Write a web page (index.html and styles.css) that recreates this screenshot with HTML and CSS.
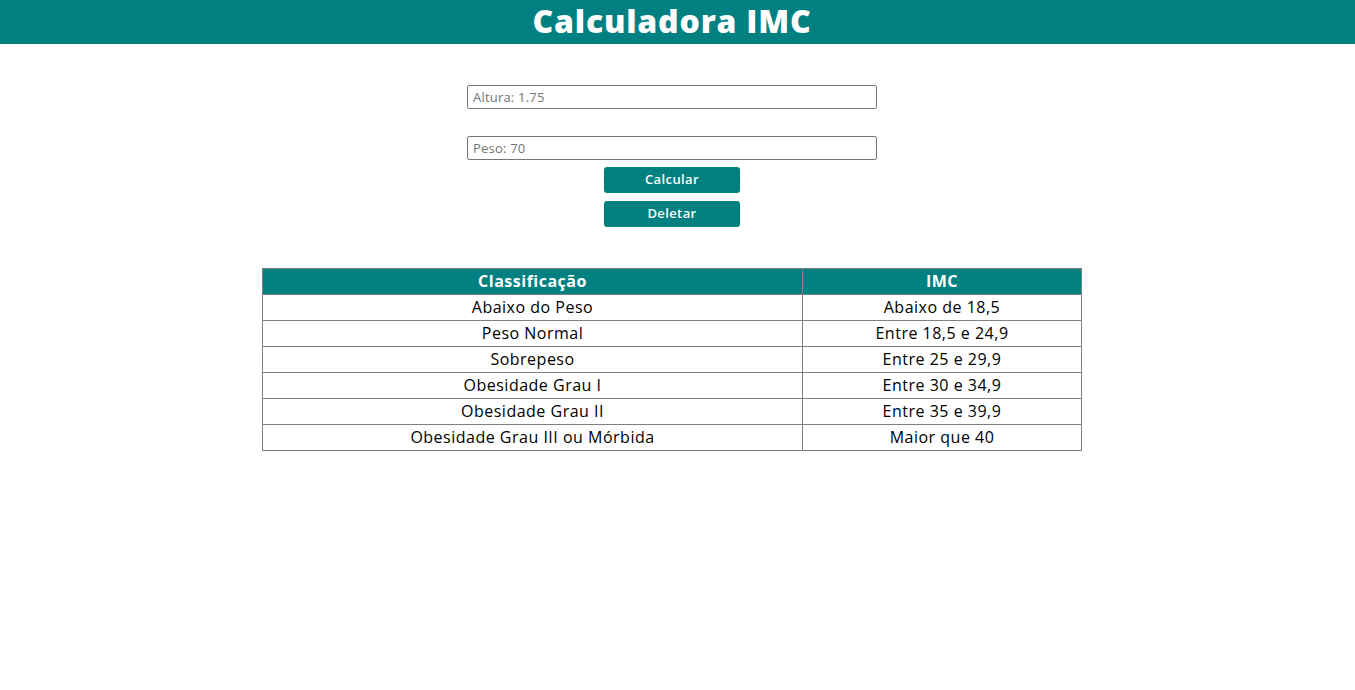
FILE: index.html
```html
<!DOCTYPE html>
<html lang="pt-BR">
<head>
<meta charset="utf-8">
<title>Calculadora IMC</title>
<link rel="stylesheet" href="styles.css">
</head>
<body>
<header class="topbar">
  <h1 class="title">Calculadora IMC</h1>
</header>
<main class="page">
  <form class="calc">
    <input class="field" type="text" placeholder="Altura: 1.75">
    <input class="field field-second" type="text" placeholder="Peso: 70">
    <button class="btn" type="button">Calcular</button>
    <button class="btn" type="button">Deletar</button>
  </form>
  <table class="imc-table">
    <thead>
      <tr><th class="col-a">Classificação</th><th>IMC</th></tr>
    </thead>
    <tbody>
      <tr><td>Abaixo do Peso</td><td>Abaixo de 18,5</td></tr>
      <tr><td>Peso Normal</td><td>Entre 18,5 e 24,9</td></tr>
      <tr><td>Sobrepeso</td><td>Entre 25 e 29,9</td></tr>
      <tr><td>Obesidade Grau I</td><td>Entre 30 e 34,9</td></tr>
      <tr><td>Obesidade Grau II</td><td>Entre 35 e 39,9</td></tr>
      <tr><td>Obesidade Grau III ou Mórbida</td><td>Maior que 40</td></tr>
    </tbody>
  </table>
</main>
</body>
</html>
```
FILE: styles.css
```css
* { box-sizing: border-box; }
body {
  margin: 0;
  font-family: "Open Sans", "Noto Sans", sans-serif;
  color: #000;
  background: #fff;
}
.topbar {
  background: #008080;
  height: 44px;
  padding-right: 11px;
  display: flex;
  align-items: center;
  justify-content: center;
}
.title {
  margin: 0;
  color: #fff;
  font-size: 32px;
  font-weight: 800;
  line-height: 42px;
  padding-bottom: 2px;
  letter-spacing: 0.8px;
}
.page {
  width: 1344px;
  display: flex;
  flex-direction: column;
  align-items: center;
}
.calc {
  margin-top: 41px;
  display: flex;
  flex-direction: column;
  align-items: center;
}
.field {
  width: 410px;
  height: 24px;
  border: 1px solid #767676;
  border-radius: 2px;
  padding: 0 5px 1px;
  font-family: inherit;
  font-size: 13px;
  letter-spacing: 0.2px;
  color: #333;
}
.field::placeholder { color: #757575; }
.field-second { margin-top: 27px; }
.btn {
  width: 136px;
  height: 26px;
  margin-top: 7px;
  padding: 0 0 2px;
  border: none;
  border-radius: 3px;
  background: #008080;
  color: #fff;
  font-family: inherit;
  font-size: 13px;
  font-weight: 600;
  letter-spacing: 0.4px;
}
.btn + .btn { margin-top: 8px; }
.imc-table {
  margin-top: 41px;
  width: 820px;
  border-collapse: collapse;
  font-size: 16px;
  letter-spacing: 0.5px;
}
.imc-table th,
.imc-table td {
  border: 1px solid #808080;
  height: 26px;
  padding: 0 0 1px;
  text-align: center;
  line-height: 23px;
}
.imc-table th {
  background: #008080;
  color: #fff;
  font-weight: 700;
}
.col-a { width: 540px; }
```
